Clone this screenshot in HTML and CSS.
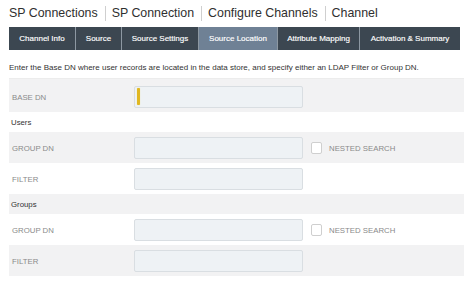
FILE: index.html
```html
<!DOCTYPE html>
<html>
<head>
<meta charset="utf-8">
<link rel="stylesheet" href="styles.css">
</head>
<body>
<div class="page">
  <h1 class="crumbs">
    <span>SP Connections</span><span class="sep"></span><span>SP Connection</span><span class="sep"></span><span>Configure Channels</span><span class="sep"></span><span>Channel</span>
  </h1>
  <nav class="tabs">
    <div class="tab">Channel Info</div>
    <div class="tab">Source</div>
    <div class="tab">Source Settings</div>
    <div class="tab active">Source Location</div>
    <div class="tab">Attribute Mapping</div>
    <div class="tab">Activation &amp; Summary</div>
  </nav>
  <p class="desc">Enter the Base DN where user records are located in the data store, and specify either an LDAP Filter or Group DN.</p>
  <div class="form">
    <div class="row shaded first">
      <div class="label">BASE DN</div>
      <div class="field focused"><input class="input" type="text"><span class="caret"></span></div>
    </div>
    <div class="section">Users</div>
    <div class="row shaded">
      <div class="label">GROUP DN</div>
      <div class="field"><input class="input" type="text"></div>
      <div class="check"><span class="box"></span><span class="check-label">NESTED SEARCH</span></div>
    </div>
    <div class="row">
      <div class="label">FILTER</div>
      <div class="field"><input class="input" type="text"></div>
    </div>
    <div class="section shaded">Groups</div>
    <div class="row">
      <div class="label">GROUP DN</div>
      <div class="field"><input class="input" type="text"></div>
      <div class="check"><span class="box"></span><span class="check-label">NESTED SEARCH</span></div>
    </div>
    <div class="row shaded">
      <div class="label">FILTER</div>
      <div class="field"><input class="input" type="text"></div>
    </div>
  </div>
</div>
</body>
</html>
```

FILE: styles.css
```css
* { box-sizing: border-box; }
html, body { margin: 0; padding: 0; background: #fff; }
body {
  font-family: "Liberation Sans", Arial, Helvetica, sans-serif;
  color: #333;
}
.page {
  width: 474px;
  padding: 0 10px 0 9px;
}
.crumbs {
  margin: 0 0 3px 0;
  height: 24px;
  display: flex;
  align-items: center;
  font-size: 12.4px;
  font-weight: normal;
  color: #2f2f2f;
  padding-top: 2px;
}
.sep {
  display: inline-block;
  width: 1px;
  height: 15px;
  background: #cfcfcf;
  margin: 0 6px 0 7px;
}
.tabs {
  display: flex;
  height: 23px;
  width: 451px;
}
.tab {
  background: #3c4751;
  color: #fff;
  font-size: 8px;
  display: flex;
  align-items: center;
  justify-content: center;
  border-left: 1px solid #8d98a2;
  -webkit-text-stroke: 0.15px #fff;
}
.tab:first-child { border-left: none; }
.tab:nth-child(1) { width: 66px; }
.tab:nth-child(2) { width: 46px; }
.tab:nth-child(3) { width: 77px; }
.tab:nth-child(4) { width: 79px; }
.tab:nth-child(5) { width: 82px; }
.tab:nth-child(6) { width: 101px; }
.tab.active { background: #6f8195; }
.desc {
  margin: 0;
  padding: 12px 0 5px 0;
  line-height: 12px;
  font-size: 8px;
  color: #333;
  border-bottom: 1px solid #ececec;
  height: 29px;
  white-space: nowrap;
}
.form { width: 455px; }
.row {
  display: flex;
  align-items: center;
  height: 31px;
  padding-top: 1px;
}
.row.first { height: 33px; padding-top: 3px; }
.row.shaded, .section.shaded { background: #f2f2f3; }
.label {
  width: 125px;
  padding-left: 3px;
  font-size: 7.8px;
  color: #8a8a8a;
}
.field {
  position: relative;
  width: 169px;
  height: 22px;
}
.input {
  display: block;
  width: 100%;
  height: 100%;
  margin: 0;
  background: #eef2f5;
  border: 1px solid #d9dee2;
  border-radius: 2px;
  outline: none;
}
.caret {
  position: absolute;
  left: 3px;
  top: 2px;
  width: 3px;
  height: 17px;
  background: #e0b722;
  box-shadow: 0 0 1px #f1d97a;
  border-radius: 1px;
}
.check {
  display: flex;
  align-items: center;
  margin-left: 8px;
}
.box {
  width: 11px;
  height: 12px;
  background: #fff;
  border: 1px solid #cfcfcf;
  border-radius: 2px;
}
.check-label {
  margin-left: 7px;
  font-size: 7.8px;
  color: #8a8a8a;
}
.section {
  height: 20px;
  display: flex;
  align-items: center;
  padding-left: 2px;
  font-size: 7.8px;
  color: #333;
}
```
